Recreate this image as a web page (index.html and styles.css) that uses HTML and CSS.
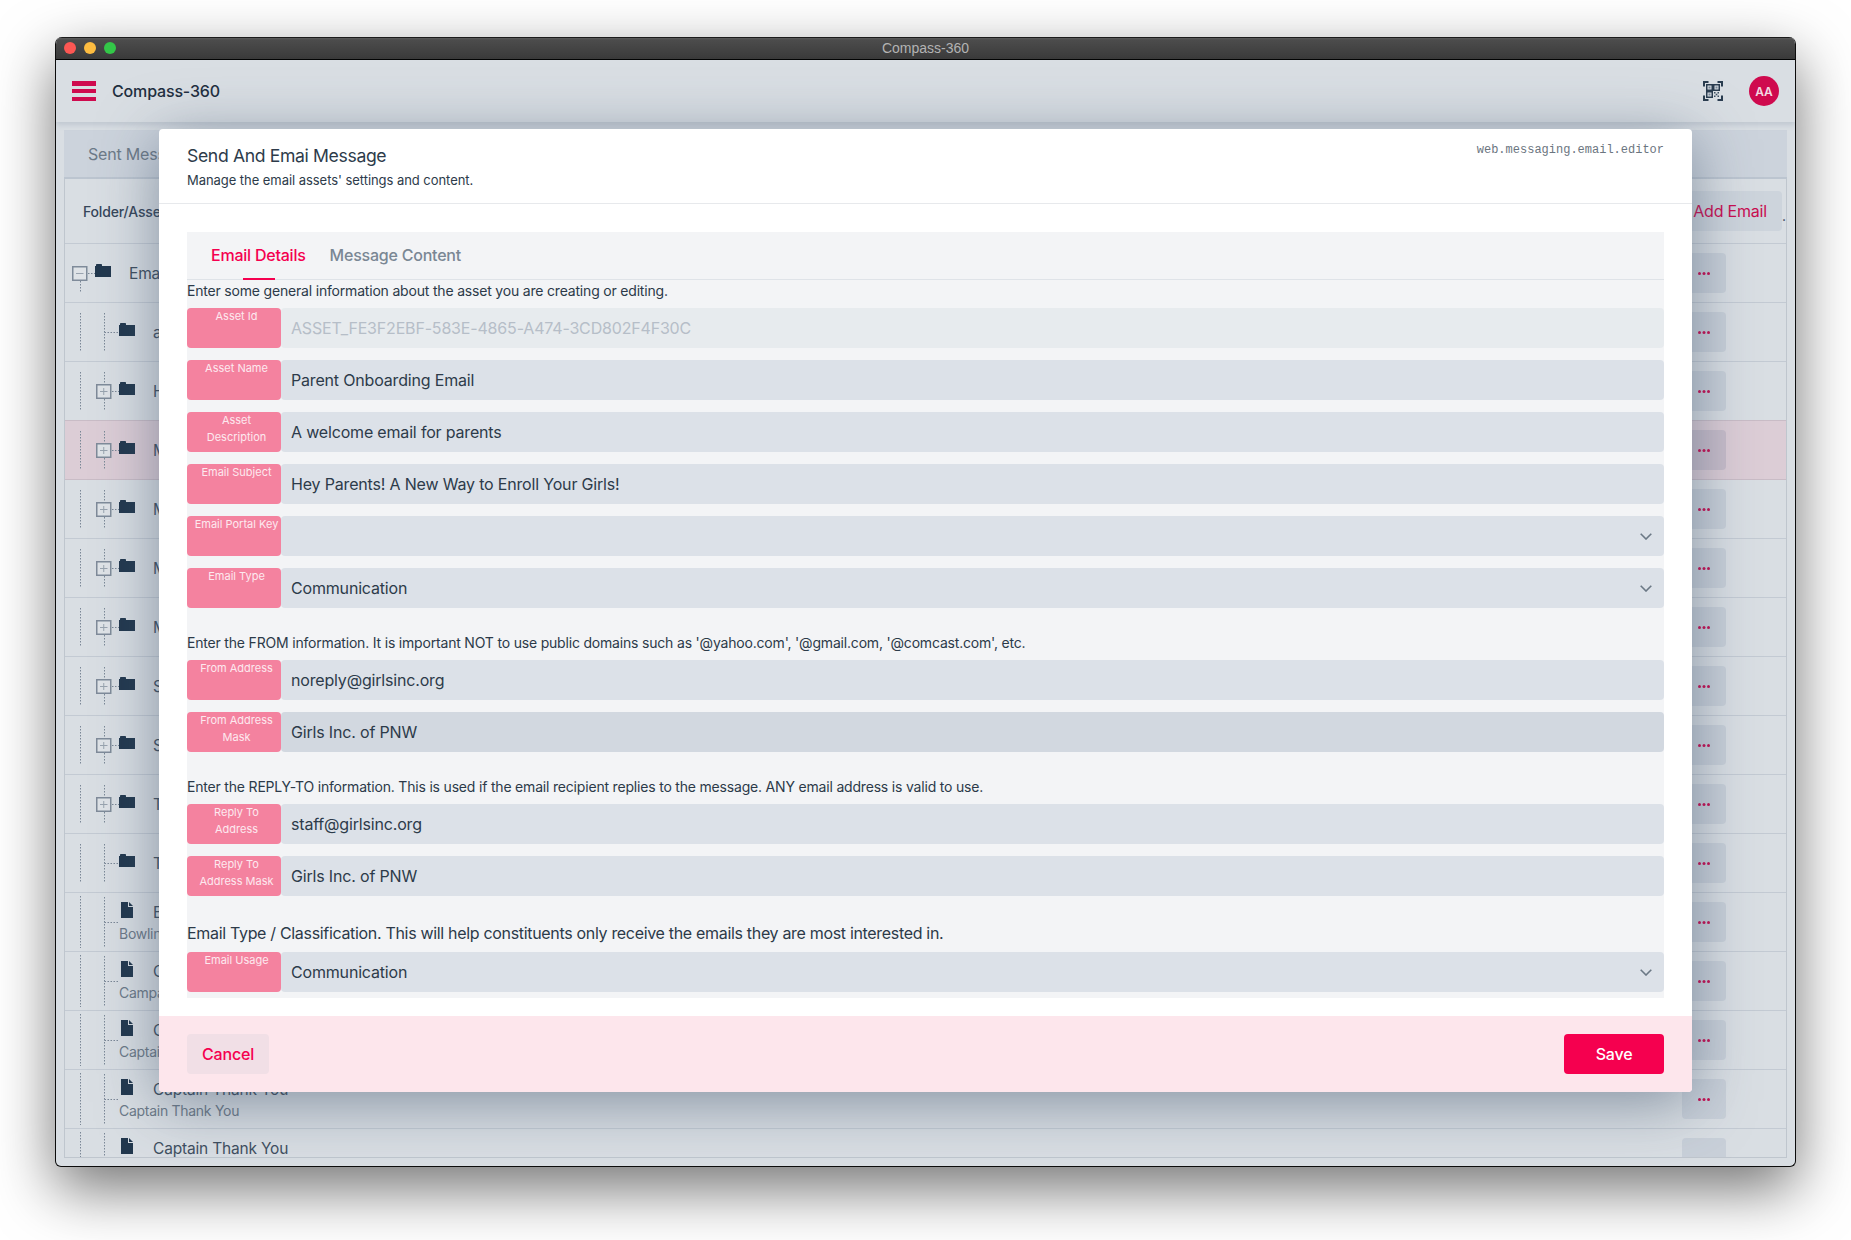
FILE: index.html
```html
<!DOCTYPE html>
<html lang="en">
<head>
<meta charset="utf-8">
<title>Compass-360</title>
<link rel="stylesheet" href="styles.css">
</head>
<body>
<svg class="defs" width="0" height="0" aria-hidden="true">
  <defs>
    <symbol id="folder" viewBox="0 0 16 13"><path d="M0 13V2H1V.8Q1 0 1.800 0H6.200Q7 0 7 .8V2H16V13Z"/></symbol>
    <symbol id="file" viewBox="0 0 12 16"><path d="M0 0H7V5H12V16H0ZM8 0L12 4H8Z"/></symbol>
    <symbol id="dots" viewBox="0 0 12 3"><circle cx="1.500" cy="1.500" r="1.500"/><circle cx="6" cy="1.500" r="1.500"/><circle cx="10.500" cy="1.500" r="1.500"/></symbol>
    <symbol id="chev" viewBox="0 0 12 7"><path d="M.7.7L6 6L11.300.7" fill="none" stroke="#6b7885" stroke-width="1.600"/></symbol>
    <symbol id="t-root" viewBox="0 0 30 59"><path class="dot" d="M15.500 38V50M23 30.500H30"/><rect class="box" x="7.750" y="23.750" width="14" height="13.500"/><path class="mark" d="M11 30.500H18.500"/></symbol>
    <symbol id="t-leaf" viewBox="0 0 54 59"><path class="dot" d="M15.500 11V50M39.500 11V50M39.500 30.500H54"/></symbol>
    <symbol id="t-exp" viewBox="0 0 54 59"><path class="dot" d="M15.500 11V23M15.500 23V50M39.500 11V23M39.500 38V50M47 30.500H54"/><rect class="box" x="31.750" y="23.750" width="14" height="13.500"/><path class="mark" d="M35 30.500H42.500M38.750 27V34"/></symbol>
    <symbol id="t-file" viewBox="0 0 54 59"><path class="dot" d="M15.500 4V56M39.500 5V56M39.500 30.500H54"/></symbol>
  </defs>
</svg>

<main class="desktop">
  <div class="window">
    <div class="titlebar">
      <span class="light light-red"></span>
      <span class="light light-yellow"></span>
      <span class="light light-green"></span>
      <span class="titlebar-text">Compass-360</span>
    </div>

    <header class="app-header">
      <div class="burger"><span></span><span></span><span></span></div>
      <div class="brand">Compass-360</div>
      <svg class="qr" viewBox="0 0 20 20" width="20" height="20">
        <path class="qr-corner" d="M1 5.500V1H5.500M14.500 1H19V5.500M19 14.500V19H14.500M5.500 19H1V14.500"/>
        <path class="qr-box" d="M3.750 3.750H9.250V9.250H3.750ZM10.750 3.750H16.250V9.250H10.750ZM3.750 10.750H9.250V16.250H3.750Z"/>
        <path class="qr-fill" d="M5.500 5.500H7.500V7.500H5.500ZM12.500 5.500H14.500V7.500H12.500ZM5.500 12.500H7.500V14.500H5.500Z"/>
        <path class="qr-bits" d="M11 11H12.500V12.500H11ZM14.500 11H16V12.500H14.500ZM12.700 12.700H14.300V14.300H12.700ZM11 14.500H12.500V16H11ZM14.500 14.500H16V16H14.500Z"/>
      </svg>
      <div class="avatar">AA</div>
    </header>

    <section class="panel">
      <div class="panel-tabs">Sent Messages</div>
      <div class="panel-body">
        <div class="toolbar">
          <span class="toolbar-title">Folder/Assets</span>
          <span class="add-email">Add Email</span>
          <span class="toolbar-dot">.</span>
        </div>

        <div class="row">
          <svg class="tree tree-root"><use href="#t-root"/></svg>
          <div class="row-main"><div class="row-line"><svg class="ico-folder"><use href="#folder"/></svg><span class="row-title">Email</span></div></div>
          <div class="more"><svg class="dots"><use href="#dots"/></svg></div>
        </div>
        <div class="row">
          <svg class="tree"><use href="#t-leaf"/></svg>
          <div class="row-main"><div class="row-line"><svg class="ico-folder"><use href="#folder"/></svg><span class="row-title">a</span></div></div>
          <div class="more"><svg class="dots"><use href="#dots"/></svg></div>
        </div>
        <div class="row">
          <svg class="tree"><use href="#t-exp"/></svg>
          <div class="row-main"><div class="row-line"><svg class="ico-folder"><use href="#folder"/></svg><span class="row-title">H</span></div></div>
          <div class="more"><svg class="dots"><use href="#dots"/></svg></div>
        </div>
        <div class="row row-active">
          <svg class="tree"><use href="#t-exp"/></svg>
          <div class="row-main"><div class="row-line"><svg class="ico-folder"><use href="#folder"/></svg><span class="row-title">M</span></div></div>
          <div class="more"><svg class="dots"><use href="#dots"/></svg></div>
        </div>
        <div class="row">
          <svg class="tree"><use href="#t-exp"/></svg>
          <div class="row-main"><div class="row-line"><svg class="ico-folder"><use href="#folder"/></svg><span class="row-title">M</span></div></div>
          <div class="more"><svg class="dots"><use href="#dots"/></svg></div>
        </div>
        <div class="row">
          <svg class="tree"><use href="#t-exp"/></svg>
          <div class="row-main"><div class="row-line"><svg class="ico-folder"><use href="#folder"/></svg><span class="row-title">M</span></div></div>
          <div class="more"><svg class="dots"><use href="#dots"/></svg></div>
        </div>
        <div class="row">
          <svg class="tree"><use href="#t-exp"/></svg>
          <div class="row-main"><div class="row-line"><svg class="ico-folder"><use href="#folder"/></svg><span class="row-title">M</span></div></div>
          <div class="more"><svg class="dots"><use href="#dots"/></svg></div>
        </div>
        <div class="row">
          <svg class="tree"><use href="#t-exp"/></svg>
          <div class="row-main"><div class="row-line"><svg class="ico-folder"><use href="#folder"/></svg><span class="row-title">S</span></div></div>
          <div class="more"><svg class="dots"><use href="#dots"/></svg></div>
        </div>
        <div class="row">
          <svg class="tree"><use href="#t-exp"/></svg>
          <div class="row-main"><div class="row-line"><svg class="ico-folder"><use href="#folder"/></svg><span class="row-title">S</span></div></div>
          <div class="more"><svg class="dots"><use href="#dots"/></svg></div>
        </div>
        <div class="row">
          <svg class="tree"><use href="#t-exp"/></svg>
          <div class="row-main"><div class="row-line"><svg class="ico-folder"><use href="#folder"/></svg><span class="row-title">T</span></div></div>
          <div class="more"><svg class="dots"><use href="#dots"/></svg></div>
        </div>
        <div class="row">
          <svg class="tree"><use href="#t-leaf"/></svg>
          <div class="row-main"><div class="row-line"><svg class="ico-folder"><use href="#folder"/></svg><span class="row-title">T</span></div></div>
          <div class="more"><svg class="dots"><use href="#dots"/></svg></div>
        </div>
        <div class="row">
          <svg class="tree"><use href="#t-file"/></svg>
          <div class="row-main row-main-file"><div class="row-line"><svg class="ico-file"><use href="#file"/></svg><span class="row-title">B</span></div><div class="row-sub">Bowling</div></div>
          <div class="more"><svg class="dots"><use href="#dots"/></svg></div>
        </div>
        <div class="row">
          <svg class="tree"><use href="#t-file"/></svg>
          <div class="row-main row-main-file"><div class="row-line"><svg class="ico-file"><use href="#file"/></svg><span class="row-title">C</span></div><div class="row-sub">Campaign</div></div>
          <div class="more"><svg class="dots"><use href="#dots"/></svg></div>
        </div>
        <div class="row">
          <svg class="tree"><use href="#t-file"/></svg>
          <div class="row-main row-main-file"><div class="row-line"><svg class="ico-file"><use href="#file"/></svg><span class="row-title">C</span></div><div class="row-sub">Captain</div></div>
          <div class="more"><svg class="dots"><use href="#dots"/></svg></div>
        </div>
        <div class="row">
          <svg class="tree"><use href="#t-file"/></svg>
          <div class="row-main row-main-file"><div class="row-line"><svg class="ico-file"><use href="#file"/></svg><span class="row-title">Captain Thank You</span></div><div class="row-sub">Captain Thank You</div></div>
          <div class="more"><svg class="dots"><use href="#dots"/></svg></div>
        </div>
        <div class="row">
          <svg class="tree"><use href="#t-file"/></svg>
          <div class="row-main row-main-file"><div class="row-line"><svg class="ico-file"><use href="#file"/></svg><span class="row-title">Captain Thank You</span></div></div>
          <div class="more"><svg class="dots"><use href="#dots"/></svg></div>
        </div>
      </div>
    </section>

    <div class="modal">
      <div class="modal-header">
        <div>
          <div class="modal-title">Send And Emai Message</div>
          <div class="modal-sub">Manage the email assets' settings and content.</div>
        </div>
        <code class="modal-code">web.messaging.email.editor</code>
      </div>

      <div class="modal-body">
        <div class="sheet">
          <nav class="tabs">
            <span class="tab tab-active">Email Details</span>
            <span class="tab">Message Content</span>
          </nav>

          <p class="note note-first">Enter some general information about the asset you are creating or editing.</p>
          <div class="field"><div class="field-label">Asset Id</div><div class="field-input field-disabled">ASSET_FE3F2EBF-583E-4865-A474-3CD802F4F30C</div></div>
          <div class="field"><div class="field-label">Asset Name</div><div class="field-input">Parent Onboarding Email</div></div>
          <div class="field"><div class="field-label">Asset Description</div><div class="field-input">A welcome email for parents</div></div>
          <div class="field"><div class="field-label">Email Subject</div><div class="field-input">Hey Parents! A New Way to Enroll Your Girls!</div></div>
          <div class="field"><div class="field-label">Email Portal Key</div><div class="field-input"><span></span><svg class="chev"><use href="#chev"/></svg></div></div>
          <div class="field"><div class="field-label">Email Type</div><div class="field-input"><span>Communication</span><svg class="chev"><use href="#chev"/></svg></div></div>

          <p class="note">Enter the FROM information. It is important NOT to use public domains such as '@yahoo.com', '@gmail.com, '@comcast.com', etc.</p>
          <div class="field"><div class="field-label">From Address</div><div class="field-input">noreply@girlsinc.org</div></div>
          <div class="field"><div class="field-label">From Address Mask</div><div class="field-input field-focus">Girls Inc. of PNW</div></div>

          <p class="note">Enter the REPLY-TO information. This is used if the email recipient replies to the message. ANY email address is valid to use.</p>
          <div class="field"><div class="field-label">Reply To Address</div><div class="field-input">staff@girlsinc.org</div></div>
          <div class="field"><div class="field-label">Reply To Address Mask</div><div class="field-input">Girls Inc. of PNW</div></div>

          <p class="note note-large">Email Type / Classification. This will help constituents only receive the emails they are most interested in.</p>
          <div class="field field-last"><div class="field-label">Email Usage</div><div class="field-input"><span>Communication</span><svg class="chev"><use href="#chev"/></svg></div></div>
        </div>
      </div>

      <div class="modal-footer">
        <button class="btn btn-cancel" type="button">Cancel</button>
        <button class="btn btn-save" type="button">Save</button>
      </div>
    </div>
  </div>
</main>
</body>
</html>
```
FILE: styles.css
```css
* { box-sizing: border-box; }
html, body { margin: 0; padding: 0; background: #fff; }
body { font-family: Inter, "Noto Sans", sans-serif; color: #2d3b4a; height: 1240px; overflow: hidden; }
.defs { display: block; height: 0; width: 0; overflow: hidden; }

.desktop { padding: 37px 55px 0; }
.window {
  position: relative;
  width: 1741px;
  height: 1130px;
  border: 1px solid #0c0c0c;
  border-top: 0;
  border-radius: 7px 7px 6px 6px;
  background: #d9dee3;
  overflow: hidden;
  box-shadow: 0 22px 60px rgba(0, 0, 0, .55);
  display: flex;
  flex-direction: column;
}

.titlebar {
  height: 23px;
  flex: none;
  display: flex;
  align-items: center;
  position: relative;
  padding-left: 8px;
  gap: 8px;
  background: linear-gradient(#1c1c1c 0, #1c1c1c 1px, #5c5c5c 1px, #4c4c4c 3px, #3a3a3a 100%);
  border-bottom: 1px solid #000;
}
.light { width: 12px; height: 12px; border-radius: 50%; }
.light-red { background: #fc5753; }
.light-yellow { background: #fdbc40; }
.light-green { background: #33c748; }
.titlebar-text {
  position: absolute;
  left: 0;
  right: 0;
  text-align: center;
  font: 14px/23px "Liberation Sans", sans-serif;
  color: #b3b3b3;
}

.app-header {
  height: 62px;
  flex: none;
  display: flex;
  align-items: center;
  padding: 0 16px;
  background: #d9dee3;
  box-shadow: 0 3px 5px rgba(120, 135, 155, .25);
  position: relative;
}
.burger { width: 24px; height: 20px; display: flex; flex-direction: column; justify-content: space-between; }
.burger span { display: block; height: 4.5px; background: #cf0a4e; }
.brand { margin-left: 16px; font-size: 16px; font-weight: 500; letter-spacing: -.01em; color: #1f2f40; }
.qr { margin-left: auto; }
.qr-corner { fill: none; stroke: #2a3d50; stroke-width: 2; }
.qr-box { fill: none; stroke: #2a3d50; stroke-width: 1.5; }
.qr-fill { fill: #7a8a9a; }
.qr-bits { fill: #3d5063; }
.avatar {
  width: 30px;
  height: 30px;
  margin-left: 26px;
  border-radius: 50%;
  background: #cf0a4e;
  color: #f2dbe3;
  font-size: 12px;
  font-weight: 600;
  display: flex;
  align-items: center;
  justify-content: center;
}

.panel {
  flex: 1;
  min-height: 0;
  margin: 8px 8px 8px;
  display: flex;
  flex-direction: column;
}
.panel-tabs {
  height: 49px;
  flex: none;
  padding: 0 24px;
  background: #ccd3dc;
  border-bottom: 2px solid #bcc5d0;
  font-size: 16px;
  letter-spacing: -.012em;
  white-space: nowrap;
  line-height: 49px;
  color: #6d7a88;
}
.panel-body {
  flex: 1;
  min-height: 0;
  overflow: hidden;
  border: 1px solid #bfc6ce;
  border-top: 0;
}
.toolbar {
  height: 64px;
  display: flex;
  align-items: center;
  padding-left: 18px;
}
.toolbar-title { font-size: 14px; font-weight: 500; letter-spacing: -.012em; color: #36465a; }
.add-email {
  margin-left: auto;
  height: 40px;
  width: 120px;
  padding-right: 15px;
  border-radius: 4px;
  background: #cdd4dc;
  color: #c90d50;
  font-size: 16px;
  letter-spacing: -.012em;
  line-height: 40px;
  text-align: right;
}
.toolbar-dot { width: 4px; margin-top: 8px; font-size: 14px; color: #36465a; }

.row {
  height: 59px;
  display: flex;
  border-top: 1px solid #c3cad3;
  overflow: hidden;
}
.row-active { background: #dccdd6; border-top-color: #c9bcc6; }
.row-active + .row { border-top-color: #c9bcc6; }
.tree { width: 54px; height: 59px; flex: none; margin-top: -1px; }
.tree-root { width: 30px; }
.dot { fill: none; stroke: #7a8796; stroke-width: 1; stroke-dasharray: 1.5 1.5; }
.box { fill: #dfe3e7; stroke: #7f8b9a; stroke-width: 1.5; }
.mark { fill: none; stroke: #99a3af; stroke-width: 1; }
.row-main { padding-top: 18px; flex: none; width: 400px; }
.row-main-file { padding-top: 8px; }
.row-line { display: flex; align-items: flex-start; height: 24px; }
.ico-folder { width: 16px; height: 13px; margin-top: 2px; fill: #22384e; flex: none; }
.ico-file { width: 12px; height: 16px; margin: 1px 0 0 2px; fill: #22384e; flex: none; }
.row-title { margin-left: 18px; font-size: 15.5px; letter-spacing: -.012em; line-height: 24px; color: #3f4f60; white-space: nowrap; }
.ico-file + .row-title { margin-left: 20px; }
.row-sub { font-size: 14px; letter-spacing: -.02em; line-height: 20px; color: #6d7a88; margin-top: -1px; white-space: nowrap; }
.more {
  width: 44px;
  height: 40px;
  margin: 9px 60px 0 auto;
  flex: none;
  border-radius: 4px;
  background: #c9d0d9;
  display: flex;
  align-items: center;
  justify-content: center;
}
.row-active .more { background: #c8bdca; }
.dots { width: 12px; height: 3px; fill: #c90d50; }

.modal {
  position: absolute;
  left: 103px;
  top: 92px;
  width: 1533px;
  height: 963px;
  border-radius: 4px;
  background: #fff;
  box-shadow: 0 10px 60px rgba(60, 80, 105, .55);
  display: flex;
  flex-direction: column;
  overflow: hidden;
}
.modal-header {
  height: 75px;
  flex: none;
  padding: 0 28px;
  border-bottom: 1px solid #e7e9ec;
  display: flex;
  justify-content: space-between;
  align-items: flex-start;
}
.modal-title { margin-top: 14px; font-size: 17.6px; letter-spacing: -.02em; line-height: 26px; color: #2d3b4a; }
.modal-sub { margin-top: 1px; font-size: 13px; letter-spacing: -.004em; line-height: 20px; color: #2d3b4a; }
.modal-code { margin-top: 13px; font: 12px/16px "Liberation Mono", monospace; color: #6b7580; }
.modal-body { height: 812px; flex: none; padding: 28px 28px 0; }
.sheet { height: 766px; background: #f3f4f6; }
.tabs {
  height: 48px;
  border-bottom: 1px solid #dfe3e8;
  padding-left: 24px;
  display: flex;
  gap: 24px;
}
.tab { position: relative; font-size: 16px; letter-spacing: -.014em; line-height: 47px; font-weight: 500; color: #7a8794; }
.tab-active { color: #f5004f; }
.tab-active::after {
  content: "";
  position: absolute;
  left: 32px;
  bottom: -1px;
  width: 32px;
  height: 2px;
  background: #f5004f;
}
.note { margin: 0; padding: 13px 0 7px; font-size: 14px; letter-spacing: -.0135em; line-height: 20px; color: #2c3a49; }
.note-first { padding-top: 1px; }
.note-large { font-size: 16px; letter-spacing: -.02em; line-height: 24px; }
.field { display: flex; height: 40px; margin-bottom: 12px; }
.field-last { margin-bottom: 0; }
.field-label {
  width: 94px;
  flex: none;
  padding: 0 0 0 5px;
  border-radius: 4px;
  background: #f4829f;
  color: #fde9ef;
  font-size: 11px;
  line-height: 16.5px;
  text-align: center;
}
.field-input {
  flex: 1;
  padding: 0 12px 0 10px;
  border-radius: 4px;
  background: #dce1e8;
  font-size: 16px;
  letter-spacing: -.011em;
  color: #2d3b4a;
  display: flex;
  align-items: center;
  justify-content: space-between;
}
.field-disabled { background: #e7ebee; color: #b6bec8; }
.field-focus { background: #d2d8e0; }
.chev { width: 12px; height: 7px; flex: none; }

.modal-footer {
  height: 76px;
  flex: none;
  margin-top: auto;
  padding: 18px 28px;
  background: #fde6ec;
  display: flex;
  justify-content: space-between;
}
.btn {
  height: 40px;
  border: 0;
  border-radius: 4px;
  font-family: Inter, sans-serif;
  font-size: 16px;
  letter-spacing: -.012em;
  font-weight: 500;
}
.btn-cancel { width: 82px; background: #f1dfe6; color: #f5004f; }
.btn-save { width: 100px; background: #f5004f; color: #fff; }
```
